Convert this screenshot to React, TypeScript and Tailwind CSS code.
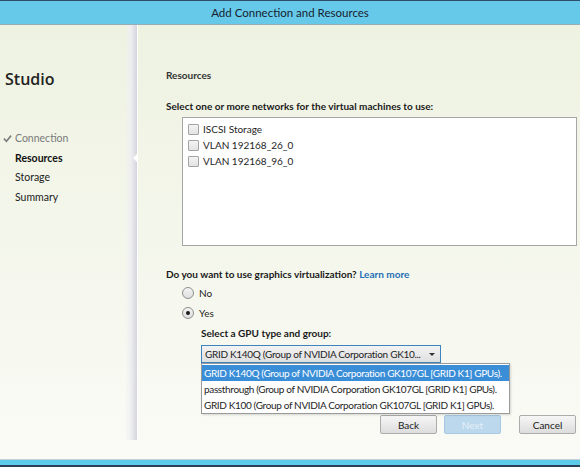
import React from "react";

const font = { fontFamily: 'Lato, "Open Sans", sans-serif' };

function Checkbox() {
  return (
    <span className="inline-block w-[11px] h-[11px] border border-[#a3a3a3] bg-gradient-to-b from-[#f4f4f4] to-[#e3e3e3] rounded-[1px] shrink-0" />
  );
}

function Radio({ checked }: { checked?: boolean }) {
  return (
    <span className="relative inline-flex items-center justify-center w-[12px] h-[12px] rounded-full border border-[#8f8f8f] bg-gradient-to-b from-[#f3f3f3] to-[#dedede] shrink-0">
      {checked && <span className="w-[4px] h-[4px] rounded-full bg-[#1a1a1a]" />}
    </span>
  );
}

export default function App() {
  return (
    <div
      className="w-[580px] h-[467px] relative overflow-hidden flex flex-col bg-[#f6f7f0] text-[#1e1e1e]"
      style={font}
    >
      {/* Title bar */}
      <div className="h-[25px] shrink-0 border-t border-[#2e4d6b] border-b border-b-[#98adb6] bg-[#66c9ea] flex items-center justify-center">
        <span className="text-[11.5px] text-[#17222d] leading-none">Add Connection and Resources</span>
      </div>

      {/* Body */}
      <div className="flex-1 flex bg-gradient-to-b from-[#eef2e1] to-[#fafbf6]">
        {/* Sidebar */}
        <div className="w-[138px] shrink-0 flex flex-col">
          <div className="flex-1 flex relative">
            <div className="flex-1 flex flex-col">
              <div className="pl-[5px] pt-[44px] text-[16px] leading-[20px] font-semibold text-[#222]" style={{ fontFamily: '"Open Sans", sans-serif' }}>Studio</div>
              <div className="mt-[40px] flex flex-col text-[10.5px] leading-[19.5px]">
                <div className="flex items-center text-[#7a7a7a]">
                  <svg width="9" height="9" viewBox="0 0 10 10" className="ml-[3px] mr-[3px]">
                    <path d="M1 5.2 L3.8 8 L9 1.8" fill="none" stroke="#7d7d7d" strokeWidth="1.8" />
                  </svg>
                  <span>Connection</span>
                </div>
                <div className="pl-[15px] font-bold text-[#111]">Resources</div>
                <div className="pl-[15px] text-[#222]">Storage</div>
                <div className="pl-[15px] text-[#222]">Summary</div>
              </div>
            </div>
            <div className="w-[12px] bg-gradient-to-r from-transparent via-[#eeeef1] to-[#d4d5dc]" />
            <div className="w-[1px] bg-white" />
            {/* pointer */}
            <div className="absolute right-0 top-[128px] w-0 h-0 border-y-[5px] border-y-transparent border-r-[5px] border-r-white" />
          </div>
          <div className="h-[19px]" />
        </div>

        {/* Content */}
        <div className="flex-1 relative pl-[28px] pt-[42px] text-[10px]">
          <div className="leading-[16px] font-bold text-[#333]">Resources</div>
          <div className="mt-[15px] leading-[16px] font-bold text-[#1a1a1a]">
            Select one or more networks for the virtual machines to use:
          </div>
          <div className="mt-[3px] ml-[16px] w-[395px] h-[129px] bg-white border border-[#a7a7a7] pt-[3px] pl-[5px]">
            {["ISCSI Storage", "VLAN 192168_26_0", "VLAN 192168_96_0"].map((t) => (
              <div key={t} className="h-[16px] flex items-center gap-[4px] leading-none">
                <Checkbox />
                <span>{t}</span>
              </div>
            ))}
          </div>

          <div className="mt-[20px] leading-[16px] font-bold text-[#1a1a1a]">
            Do you want to use graphics virtualization? <span className="text-[#1f6fb6] font-bold">Learn more</span>
          </div>
          <div className="mt-[1px] ml-[16px] h-[20px] flex items-center gap-[5px]">
            <Radio />
            <span>No</span>
          </div>
          <div className="ml-[16px] h-[20px] flex items-center gap-[5px]">
            <Radio checked />
            <span>Yes</span>
          </div>
          <div className="mt-[2px] ml-[35px] leading-[16px] font-bold text-[#1a1a1a]">Select a GPU type and group:</div>
          <div className="mt-[4px] ml-[35px] w-[240px] h-[18px] border border-[#3d84bf] bg-gradient-to-b from-[#f3f3f3] to-[#e0e0e0] flex items-center pl-[3px] pr-[5px] leading-none tracking-[-0.3px]">
            <span className="flex-1 whitespace-nowrap">GRID K140Q (Group of NVIDIA Corporation GK10...</span>
            <span className="ml-[2px] w-0 h-0 border-x-[3px] border-x-transparent border-t-[3px] border-t-[#333]" />
          </div>

          <div className="mt-[52px] flex justify-end pr-[4px]">
            <button className="w-[57px] h-[19px] border border-[#acacac] rounded-[2px] bg-gradient-to-b from-[#f6f6f6] to-[#dddddd] leading-none text-[#1a1a1a]">
              Back
            </button>
            <button className="ml-[7px] w-[57px] h-[19px] border border-[#a7c8e2] rounded-[2px] bg-[#bcd8ed] leading-none text-[#e4eff8]">
              Next
            </button>
            <button className="ml-[18px] w-[57px] h-[19px] border border-[#acacac] rounded-[2px] bg-gradient-to-b from-[#f6f6f6] to-[#dddddd] leading-none text-[#1a1a1a]">
              Cancel
            </button>
          </div>

          {/* Dropdown list overlay */}
          <div className="absolute left-[63px] top-[338px] w-[309px] bg-white border border-[#9a9a9a] shadow-[1px_1px_2px_rgba(0,0,0,0.15)] py-[1px] leading-none tracking-[-0.35px]">
            <div className="h-[16px] flex items-center px-[2px] bg-[#3a8dd7] text-white whitespace-nowrap">
              GRID K140Q (Group of NVIDIA Corporation GK107GL [GRID K1] GPUs).
            </div>
            <div className="h-[16px] flex items-center px-[2px] whitespace-nowrap">
              passthrough (Group of NVIDIA Corporation GK107GL [GRID K1] GPUs).
            </div>
            <div className="h-[15px] flex items-center px-[2px] whitespace-nowrap">
              GRID K100 (Group of NVIDIA Corporation GK107GL [GRID K1] GPUs).
            </div>
          </div>
        </div>
      </div>

      {/* Bottom bar */}
      <div className="h-[8px] shrink-0 border-t border-[#c5d0d5] bg-[#5ccbe9] border-b-[2px] border-b-[#2a4158]" />
    </div>
  );
}
